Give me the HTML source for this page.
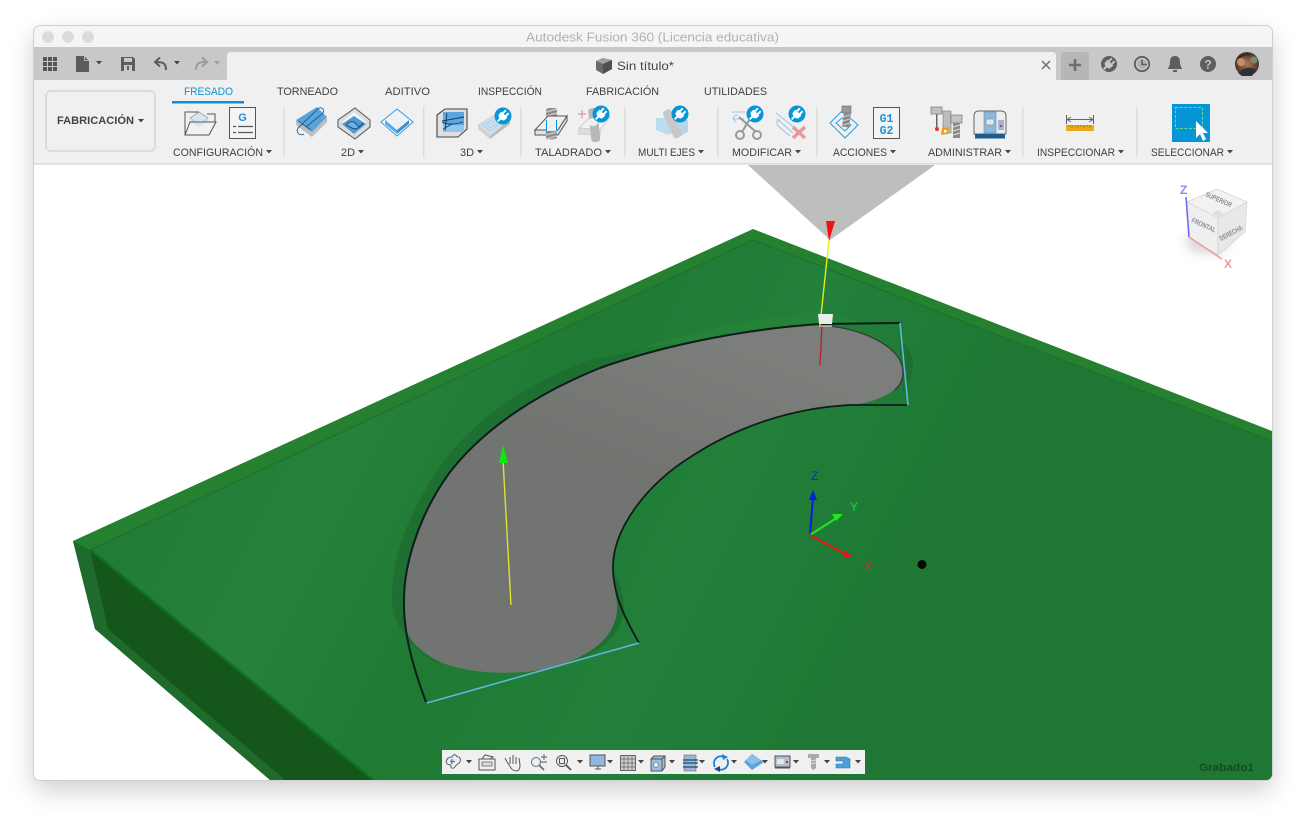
<!DOCTYPE html>
<html lang="es">
<head>
<meta charset="utf-8">
<title>Autodesk Fusion 360</title>
<style>
html,body{margin:0;padding:0;width:1306px;height:822px;overflow:hidden;background:#fff}
#win{position:absolute;left:34px;top:26px;width:1238px;height:754px;border-radius:6px;overflow:hidden;box-shadow:0 0 0 1px #cfcfcf,0 10px 26px rgba(0,0,0,.2);background:#fff}
#win svg{position:absolute;left:-34px;top:-26px;display:block}
text{font-family:"Liberation Sans",sans-serif}
.l{font-size:11px;fill:#404040}
</style>
</head>
<body>
<div id="win">
<svg width="1306" height="822" viewBox="0 0 1306 822" xmlns="http://www.w3.org/2000/svg">
<defs>
<linearGradient id="face" gradientUnits="userSpaceOnUse" x1="120" y1="420" x2="800" y2="760">
<stop offset="0" stop-color="#1f7a34"/><stop offset=".28" stop-color="#26823b"/><stop offset=".5" stop-color="#1f7a33"/><stop offset=".75" stop-color="#22803a"/><stop offset="1" stop-color="#1e7833"/>
</linearGradient>
<linearGradient id="grey" gradientUnits="userSpaceOnUse" x1="700" y1="330" x2="640" y2="480">
<stop offset="0" stop-color="#7c7e7b"/><stop offset="1" stop-color="#717470"/>
</linearGradient>
<radialGradient id="av" cx=".5" cy=".5" r=".6"><stop offset="0" stop-color="#b07a58"/><stop offset=".6" stop-color="#6a4634"/><stop offset="1" stop-color="#2a2a2a"/></radialGradient>
<filter id="blur" x="-50%" y="-50%" width="200%" height="200%"><feGaussianBlur stdDeviation="5"/></filter>
<g id="plug">
<circle r="8.500" fill="#0696d7"/>
<g transform="rotate(45)" fill="#fff">
<path d="M-4.200 -2 H4.200 V.8 Q4.200 4 0 4 Q-4.200 4 -4.200 .8 Z"/>
<rect x="-3" y="-6" width="2" height="4"/><rect x="1" y="-6" width="2" height="4"/>
<rect x="-1" y="3.500" width="2" height="4"/>
</g>
</g>
<polygon id="c" points="0,0 6,0 3,3.500" fill="#444"/>
</defs>

<!-- viewport -->
<rect x="34" y="164" width="1238" height="616" fill="#fff"/>
<polygon points="753,229 1272,431 1272,780 270,780 95,629 73,541" fill="#25802f"/>
<polygon points="73,541 90,550 108,629 285,780 270,780 95,629" fill="#1e6b2b"/>
<polygon points="90,550 373,780 285,780 108,629" fill="#15561a"/>
<polygon points="90,550 753,240 1272,441 1272,780 373,780" fill="url(#face)"/>
<path d="M90 550 L373 780" stroke="#0f6e1f" stroke-width="2.500" fill="none"/>
<path d="M90 550 L753 240 L1272 441" stroke="#1b6f2e" stroke-width="1" fill="none"/>

<!-- pocket shadows / ledge -->
<path d="M440 664 C410 650 393 625 392 600 C391 555 412 500 455 447 C490 408 540 378 590 360 L640 350 L600 372 L450 480 L410 600 Z" fill="#1e7032"/>
<path d="M615 575 C624 590 625 605 622 620 C615 640 600 650 578 660 L590 645 L612 610 Z" fill="#1e7032"/>
<path d="M640 348 C700 328 770 316 817 313 C835 313 850 317 860 323 L820 325 L700 342 Z" fill="#248239"/>
<path d="M900 340 C908 347 913 355 913 362 C913 375 909 385 903 394 L900 365 Z" fill="#1e7032"/>

<!-- grey -->
<path d="M405 625 C403 615 404 605 404 600 C404 560 422 510 450 472 C485 427 540 392 600 368 C650 350 730 330 820 325 C860 328 902 345 903 372 C903 390 880 402 850 405 C790 408 735 428 692 456 C645 485 613 530 613 567 C613 580 615 590 617 603 C619 625 605 648 570 661 C540 675 480 678 440 662 C420 652 408 640 405 625 Z" fill="url(#grey)"/>
<path d="M820 325 C860 328 902 345 903 372 C903 380 900 385 895 390" fill="none" stroke="#2c3e34" stroke-width="1.300"/>
<path d="M426 702 C412 665 403 630 404 600 C404 560 422 510 450 472 C485 427 540 392 600 368 C650 350 730 330 820 324 L900 323" fill="none" stroke="#0f1c1c" stroke-width="2"/>
<path d="M639 643 C625 618 613 595 613 567 C613 530 645 485 692 456 C735 428 790 408 850 405 L907 405" fill="none" stroke="#0f1c1c" stroke-width="1.800"/>
<path d="M427 703 L639 643 M900 323 L908 405" fill="none" stroke="#63b5de" stroke-width="1.600"/>

<!-- cone -->
<polygon points="748,165 935,165 830,240" fill="#bebebd"/>
<path d="M829 240 L820 325" stroke="#e8e81a" stroke-width="1.400" fill="none"/>
<path d="M822 326 L820 365" stroke="#b3262a" stroke-width="1.400" fill="none"/>
<polygon points="826,221 835,221 829,241" fill="#f50f0f"/>
<polygon points="818,314 833,314 832,324 819,324" fill="#e8ecea"/>
<path d="M819 326 L832 326" stroke="#e8ecea"/>
<path d="M503 460 L511 605" stroke="#e2e22a" stroke-width="1.400" fill="none"/>
<polygon points="503,445 508,463 499,463" fill="#0fe80f"/>

<!-- axes -->
<path d="M810 535 L813 498" stroke="#0a1ee0" stroke-width="2" fill="none"/>
<polygon points="813,490 817,500 809,500" fill="#0a1ee0"/>
<path d="M810 535 L838 517" stroke="#22e622" stroke-width="2" fill="none"/>
<polygon points="843,514 836,521 832,514" fill="#22e622"/>
<path d="M810 535 L845 554" stroke="#ee1212" stroke-width="2" fill="none"/>
<polygon points="853,558 843,558 846,551" fill="#ee1212"/>
<text x="811" y="480" font-size="12" fill="#0a2ad0">Z</text>
<text x="850" y="511" font-size="12" fill="#22d83a">Y</text>
<text x="864" y="570" font-size="12" fill="#dc2a2a">X</text>
<circle cx="922" cy="564.500" r="4.500" fill="#070c08"/>
<text x="1199" y="771" font-size="11" font-weight="bold" fill="#164a20" textLength="55" lengthAdjust="spacingAndGlyphs">Grabado1</text>

<!-- view cube -->
<ellipse cx="1207" cy="242" rx="22" ry="12" fill="#bdbdbd" opacity=".55" filter="url(#blur)"/>
<polygon points="1217,189 1247,202 1218,218 1187,202" fill="#f2f2f2" stroke="#d2d2d2" stroke-width=".7"/>
<polygon points="1187,202 1218,218 1218,255 1189,237" fill="#efefef" stroke="#d2d2d2" stroke-width=".7"/>
<polygon points="1247,202 1218,218 1218,255 1245,232" fill="#e8e8e8" stroke="#d2d2d2" stroke-width=".7"/>
<polygon points="1212,213 1218,210 1224,214 1218,217" fill="#dedede"/>
<text transform="translate(1205,196) rotate(24)" font-size="7" font-weight="bold" fill="#8c8c8c" textLength="28" lengthAdjust="spacingAndGlyphs">SUPERIOR</text>
<text transform="translate(1191,222) rotate(24)" font-size="7" font-weight="bold" fill="#8c8c8c" textLength="26" lengthAdjust="spacingAndGlyphs">FRONTAL</text>
<text transform="translate(1221,241) rotate(-28)" font-size="7" font-weight="bold" fill="#8c8c8c" textLength="25" lengthAdjust="spacingAndGlyphs">DERECHA</text>
<path d="M1186 197 L1189 237" stroke="#6a6ef0" stroke-width="1.600" fill="none"/>
<path d="M1189 237 L1222 259" stroke="#ee9c9c" stroke-width="1.600" fill="none"/>
<text x="1180" y="194" font-size="12" font-weight="bold" fill="#8a8ee8">Z</text>
<text x="1224" y="268" font-size="12" font-weight="bold" fill="#f09a9a">X</text>

<!-- title bar -->
<rect x="34" y="26" width="1238" height="21" fill="#f5f5f5"/>
<circle cx="48" cy="37" r="6" fill="#dcdcdc"/><circle cx="68" cy="37" r="6" fill="#dcdcdc"/><circle cx="88" cy="37" r="6" fill="#dcdcdc"/>
<text x="526" y="41.500" font-size="13" fill="#b2b2b2" textLength="253" lengthAdjust="spacingAndGlyphs">Autodesk Fusion 360 (Licencia educativa)</text>

<!-- tab strip -->
<rect x="34" y="47" width="1238" height="33" fill="#c8c8c8"/>
<rect x="34" y="80" width="1238" height="85" fill="#f0f0f0"/>
<path d="M227 80 V56 Q227 52 231 52 H1052 Q1056 52 1056 56 V80 Z" fill="#f0f0f0"/>
<path d="M1061 80 V56 Q1061 52 1065 52 H1085 Q1089 52 1089 56 V80 Z" fill="#b6b6b6"/>
<path d="M1075 59 V71 M1069 65 H1081" stroke="#6e6e6e" stroke-width="2.600"/>
<rect x="34" y="163" width="1238" height="1.500" fill="#dedede"/>

<!-- grid -->
<g fill="#555">
<rect x="43" y="57" width="4" height="4"/><rect x="48" y="57" width="4" height="4"/><rect x="53" y="57" width="4" height="4"/>
<rect x="43" y="62" width="4" height="4"/><rect x="48" y="62" width="4" height="4"/><rect x="53" y="62" width="4" height="4"/>
<rect x="43" y="67" width="4" height="4"/><rect x="48" y="67" width="4" height="4"/><rect x="53" y="67" width="4" height="4"/>
</g>
<path d="M76 56 H84 L89 61 V72 H76 Z" fill="#5c5c5c"/><path d="M84.500 56 V60.500 H89" stroke="#c8c8c8" fill="none" stroke-width=".8"/>
<use href="#c" x="96" y="61"/>
<path d="M121 57 H133 L135 59 V71 H121 Z" fill="#5c5c5c"/><rect x="124" y="58" width="8" height="4" fill="#c8c8c8"/><rect x="124" y="65" width="8" height="6" fill="#c8c8c8"/><rect x="127" y="66" width="2" height="4" fill="#5c5c5c"/>
<path d="M166 70 C166 63 163 62 156 62 M160 57.500 L155 62 L160 66.500" fill="none" stroke="#5c5c5c" stroke-width="2"/>
<use href="#c" x="174" y="61"/>
<path d="M196 70 C196 63 199 62 206 62 M202 57.500 L207 62 L202 66.500" fill="none" stroke="#9c9c9c" stroke-width="2"/>
<polygon points="214,61 220,61 217,65" fill="#a0a0a0"/>

<!-- tab title -->
<polygon points="596,61 603,58 612,60 612,69 603,74 596,70" fill="#6a6a6a"/><polygon points="596,61 603,64 612,60 603,58" fill="#a0a0a0"/><polygon points="603,64 612,60 612,69 603,74" fill="#505050"/>
<text x="617" y="70" font-size="12" fill="#444" textLength="57" lengthAdjust="spacingAndGlyphs">Sin título*</text>
<path d="M1042 61 L1050 69 M1050 61 L1042 69" stroke="#6a6a6a" stroke-width="1.400"/>

<!-- right icons -->
<circle cx="1109" cy="64" r="8" fill="#5e5e5e"/>
<g transform="translate(1109 64) rotate(45)" fill="#c8c8c8"><path d="M-4 -2 H4 V1 Q4 4 0 4 Q-4 4 -4 1 Z"/><rect x="-3" y="-6" width="2" height="4"/><rect x="1" y="-6" width="2" height="4"/><rect x="-1" y="3.500" width="2" height="4"/></g>
<circle cx="1142" cy="64" r="7.200" fill="none" stroke="#5e5e5e" stroke-width="1.800"/><circle cx="1142" cy="64" r="5" fill="#8a8a8a" opacity=".35"/><path d="M1142 59.500 V64.500 H1147" fill="none" stroke="#5e5e5e" stroke-width="1.500"/>
<path d="M1175 56 C1179 56 1180 59 1180 62 C1180 66 1182 68 1182 69 H1168 C1168 68 1170 66 1170 62 C1170 59 1171 56 1175 56 Z" fill="#5e5e5e"/><rect x="1173" y="70" width="4" height="2" fill="#5e5e5e"/>
<circle cx="1208" cy="64" r="8" fill="#5e5e5e"/><text x="1208" y="68.500" font-size="12" font-weight="bold" text-anchor="middle" fill="#c8c8c8">?</text>
<circle cx="1247" cy="64" r="12" fill="url(#av)"/><path d="M1238 73 Q1247 64 1256 70 L1252 76 H1242 Z" fill="#2c3238"/><circle cx="1254" cy="60" r="3.500" fill="#7a8a72"/><circle cx="1241" cy="62" r="4" fill="#c48e68"/><path d="M1238 58 Q1245 53 1250 55" stroke="#3a2a22" stroke-width="2" fill="none"/>

<!-- FABRICACION btn -->
<rect x="46" y="91" width="109" height="60" rx="5" fill="#f0f0f0" stroke="#dcdcdc" stroke-width="2"/>
<text x="57" y="124" font-size="11" font-weight="bold" fill="#444" textLength="77" lengthAdjust="spacingAndGlyphs">FABRICACIÓN</text>
<use href="#c" x="138" y="119"/>

<!-- tabs -->
<text x="184" y="95" font-size="11" fill="#0696d7" textLength="49" lengthAdjust="spacingAndGlyphs">FRESADO</text>
<rect x="172" y="101" width="72" height="2.500" fill="#0696d7"/>
<text class="l" x="277" y="95" textLength="61" lengthAdjust="spacingAndGlyphs">TORNEADO</text>
<text class="l" x="385" y="95" textLength="45" lengthAdjust="spacingAndGlyphs">ADITIVO</text>
<text class="l" x="478" y="95" textLength="64" lengthAdjust="spacingAndGlyphs">INSPECCIÓN</text>
<text class="l" x="586" y="95" textLength="73" lengthAdjust="spacingAndGlyphs">FABRICACIÓN</text>
<text class="l" x="704" y="95" textLength="63" lengthAdjust="spacingAndGlyphs">UTILIDADES</text>

<!-- separators -->
<g fill="#dcdcdc">
<rect x="283" y="107" width="1.500" height="50"/><rect x="423" y="107" width="1.500" height="50"/><rect x="520" y="107" width="1.500" height="50"/><rect x="624" y="107" width="1.500" height="50"/><rect x="717" y="107" width="1.500" height="50"/><rect x="816" y="107" width="1.500" height="50"/><rect x="1022" y="107" width="1.500" height="50"/><rect x="1136" y="107" width="1.500" height="50"/>
</g>

<!-- labels -->
<text class="l" x="173" y="156" textLength="90" lengthAdjust="spacingAndGlyphs">CONFIGURACIÓN</text><use href="#c" x="266" y="150"/>
<text class="l" x="341" y="156" textLength="14" lengthAdjust="spacingAndGlyphs">2D</text><use href="#c" x="358" y="150"/>
<text class="l" x="460" y="156" textLength="14" lengthAdjust="spacingAndGlyphs">3D</text><use href="#c" x="477" y="150"/>
<text class="l" x="535" y="156" textLength="67" lengthAdjust="spacingAndGlyphs">TALADRADO</text><use href="#c" x="605" y="150"/>
<text class="l" x="638" y="156" textLength="57" lengthAdjust="spacingAndGlyphs">MULTI EJES</text><use href="#c" x="698" y="150"/>
<text class="l" x="732" y="156" textLength="60" lengthAdjust="spacingAndGlyphs">MODIFICAR</text><use href="#c" x="795" y="150"/>
<text class="l" x="833" y="156" textLength="54" lengthAdjust="spacingAndGlyphs">ACCIONES</text><use href="#c" x="890" y="150"/>
<text class="l" x="928" y="156" textLength="74" lengthAdjust="spacingAndGlyphs">ADMINISTRAR</text><use href="#c" x="1005" y="150"/>
<text class="l" x="1037" y="156" textLength="78" lengthAdjust="spacingAndGlyphs">INSPECCIONAR</text><use href="#c" x="1118" y="150"/>
<text class="l" x="1151" y="156" textLength="73" lengthAdjust="spacingAndGlyphs">SELECCIONAR</text><use href="#c" x="1227" y="150"/>

<!-- Config icons -->
<path d="M185 135 V112 H199 M207 114 H215 V122" fill="none" stroke="#555" stroke-width="1"/>
<path d="M190 118 L199 112 L208 118 L199 125 Z" fill="#d8e6f0" stroke="#888" stroke-width=".7"/>
<path d="M190 118 L199 125 L208 118 L208 121 L199 128 L190 122 Z" fill="#cfe2f2"/>
<path d="M185 135 L190 122 H216 L209 135 Z" fill="#eef2f5" fill-opacity=".5" stroke="#555" stroke-width="1"/>
<rect x="229.500" y="107.500" width="26" height="31" fill="#f4f4f4" stroke="#555"/>
<text x="242.500" y="121" font-size="11" font-weight="bold" fill="#1b92de" text-anchor="middle">G</text>
<path d="M233 126.500 H236 M238 126.500 H253 M233 132.500 H236 M238 132.500 H253" stroke="#555" stroke-width="1.200"/>

<!-- 2D -->
<polygon points="296,120 312,132 327,117 327,122 312,137 296,125" fill="#bdbdbd"/>
<polygon points="296,120 317,107 327,117 312,132" fill="#5aa4dc"/>
<path d="M304 134 A3.500 3.500 0 0 1 299 127 L318 109 A2.500 2.500 0 0 1 323 113 L306 127 M298 121 L311 130" fill="none" stroke="#1f5a8a" stroke-width=".9"/>
<polygon points="355,108 370,120 370,127 355,139 338,127 338,120" fill="#dcdcdc" stroke="#555" stroke-width="1"/>
<polygon points="354,112 366,122 354,133 342,122" fill="#f6f6f6"/>
<polygon points="354,116 366,124 354,134 342,124" fill="#4b99d6"/>
<path d="M346 125 Q352 119 356 124 T363 123 Q357 131 352 128 T346 125" fill="#6fb0e2" stroke="#123c5c" stroke-width=".8"/>
<polygon points="381,122 397,136 413,122 397,109" fill="#fff" stroke="#2e9ae0" stroke-width="1"/>
<polygon points="385,120 397,110 409,120 397,130" fill="#eef2f6"/>
<polygon points="385,120 397,130 397,134 385,124" fill="#5aa6e0"/><polygon points="409,120 397,130 397,134 409,124" fill="#3f8fd0"/>

<!-- 3D -->
<polygon points="437,115 445,109 467,109 467,129 458,137 437,137" fill="#e0e0e0" stroke="#444" stroke-width="1.100"/>
<rect x="443" y="112" width="21" height="20" fill="#5aa6e0"/>
<rect x="443" y="125" width="21" height="7" fill="#93c4ea"/>
<path d="M442 121 L464 117 M442 122 Q450 126 463 122 M443 129 L452 124 M447 113 L445 131" stroke="#173a5c" stroke-width=".9" fill="none"/>
<polygon points="478,125 500,112 510,120 490,136" fill="#cfe0ee" stroke="#d0d0d0"/>
<path d="M483 125 L500 115 L506 120 L490 131 Z M487 125 L500 118 L502 120 L490 128 Z" fill="none" stroke="#a8c8e0" stroke-width=".7"/>
<polygon points="478,125 490,136 490,139 478,129" fill="#d0d0d0"/><polygon points="510,120 490,136 490,139 510,124" fill="#bcbcbc"/>
<use href="#plug" x="503" y="116"/>

<!-- drilling -->
<rect x="546" y="108" width="11" height="30" rx="3" fill="#8c8c8c"/>
<path d="M546 112 L557 109 M546 116 L557 113 M546 120 L557 117 M546 134 L557 131 M546 138 L557 135" stroke="#c4c4c4" stroke-width="1.500"/>
<polygon points="535,130 548,116 567,116 558,130" fill="#efefef" stroke="#555"/>
<path d="M535 130 H558 L567 116 V121 L558 135 H535 Z" fill="#e2e2e2" stroke="#555"/>
<rect x="546" y="121" width="11" height="10" fill="#efefef"/>
<path d="M546.500 120 V131 M556.500 120 V131" stroke="#0696d7"/>
<path d="M546 131 H557 V138 Q551 141 546 138 Z" fill="#8c8c8c"/>
<path d="M546 135 L557 132 M546 139 L557 136" stroke="#c4c4c4" stroke-width="1.500"/>
<path d="M582 110 V118 M578 114 H586" stroke="#e79494" stroke-width="1.300"/>
<polygon points="579,128 590,117 610,117 600,130" fill="#f2f2f2" stroke="#ccc"/>
<polygon points="579,128 600,130 600,135 579,134" fill="#dfdfdf" stroke="#ccc"/>
<rect x="590" y="108" width="9" height="34" rx="3" fill="#b8b8b8" transform="rotate(-6 595 127)"/>
<ellipse cx="593" cy="122" rx="5" ry="4" fill="#efefef"/>
<use href="#plug" x="601" y="114"/>

<!-- multi -->
<polygon points="656,118 680,118 680,130 668,135 656,130" fill="#bcdcf2"/>
<polygon points="670,122 688,120 688,132 676,138" fill="#b4d6ef"/>
<rect x="668" y="109" width="9" height="30" rx="3" fill="#c8c8c8" transform="rotate(-25 672 124)"/>
<use href="#plug" x="680" y="114"/>

<!-- modify -->
<path d="M732 112 H745 M732 119 H744 M736 122 Q730 116 738 115" stroke="#9cc6e6" fill="none" stroke-width="1"/>
<path d="M739 117 L756 132 M751 117 L742 132" stroke="#999" stroke-width="2"/>
<circle cx="740" cy="135" r="4" fill="none" stroke="#999" stroke-width="2"/><circle cx="757" cy="135" r="4" fill="none" stroke="#999" stroke-width="2"/>
<use href="#plug" x="755" y="114"/>
<path d="M776 113 L795 128 M777 119 L793 133 M778 126 L790 136 M778 126 Q775 120 780 120" stroke="#9cc6e6" fill="none" stroke-width="1.100"/>
<path d="M793 127 L805 138 M805 127 L793 138" stroke="#e59b9b" stroke-width="3.500"/>
<use href="#plug" x="797" y="114"/>

<!-- actions -->
<polygon points="830,123 842,111 858,125 845,138" fill="none" stroke="#2a9ae2" stroke-width="1"/>
<polygon points="836,123 842,118 851,125 845,131" fill="none" stroke="#2a9ae2" stroke-width="1"/>
<rect x="842" y="106" width="9" height="7" fill="#999" stroke="#666" stroke-width=".6"/>
<rect x="843" y="113" width="7" height="14" fill="#888" transform="rotate(8 846 120)"/>
<path d="M843 117 L850 115 M843 121 L850 119 M843 125 L850 123" stroke="#ccc" stroke-width="1"/>
<rect x="873.500" y="107.500" width="26" height="31" fill="#f4f4f4" stroke="#555"/>
<text x="886.500" y="122" font-size="11.500" font-weight="bold" fill="#1b92de" text-anchor="middle" style="font-family:'Liberation Mono',monospace">G1</text>
<text x="886.500" y="134" font-size="11.500" font-weight="bold" fill="#1b92de" text-anchor="middle" style="font-family:'Liberation Mono',monospace">G2</text>

<!-- manage -->
<rect x="931" y="107" width="11" height="7" fill="#c0c0c0" stroke="#777" stroke-width=".7"/>
<rect x="936" y="114" width="1.500" height="14" fill="#666"/>
<circle cx="937" cy="129" r="2" fill="#e8303a"/>
<rect x="943" y="111" width="8" height="22" fill="#bdbdbd" stroke="#888" stroke-width=".7"/>
<rect x="951" y="115" width="11" height="8" fill="#c4c4c4" stroke="#777" stroke-width=".7"/>
<rect x="953" y="123" width="7" height="15" fill="#8a8a8a"/>
<path d="M953 127 L960 125 M953 131 L960 129 M953 135 L960 133" stroke="#ddd"/>
<polygon points="942,128 950,127 948,134 941,135" fill="#e8a020"/>
<rect x="944" y="130" width="2.500" height="2.500" fill="#fff"/>
<path d="M974 134 V116 Q974 111 979 111 H1001 Q1006 111 1006 116 V134 Z" fill="#ececec" stroke="#666"/>
<rect x="975" y="134" width="30" height="4.500" fill="#1e5c8e"/>
<rect x="984" y="112" width="12" height="21" fill="#8cb8dc" stroke="#6a8eaa" stroke-width=".6"/>
<rect x="986" y="119" width="8" height="6" fill="#dce8f0" stroke="#777" stroke-width=".5"/>
<rect x="998" y="120" width="6" height="10" fill="#9cb8d0"/><rect x="1000" y="125" width="2" height="2" fill="#e03040"/>

<!-- inspect -->
<path d="M1066.500 115 V124 M1093.500 115 V124" stroke="#666"/>
<path d="M1067 119.500 H1093 M1071 117 L1067 119.500 L1071 122 M1089 117 L1093 119.500 L1089 122" stroke="#666" fill="none"/>
<rect x="1066" y="125" width="28" height="6" fill="#f0a818"/>
<path d="M1069 125 V127 M1072 125 V128 M1075 125 V127 M1078 125 V128 M1081 125 V127 M1084 125 V128 M1087 125 V127 M1090 125 V128" stroke="#7a5808" stroke-width=".6"/>

<!-- select -->
<rect x="1172" y="104" width="38" height="38" fill="#0696d7"/>
<rect x="1175.500" y="107.500" width="27" height="21" fill="none" stroke="#62dc9c" stroke-dasharray="3 1.500"/>
<path d="M1196 121 V138 L1200 134 L1203 141 L1206 139 L1203 133 L1208 133 Z" fill="#fff"/>

<!-- bottom toolbar -->
<rect x="442" y="750" width="423" height="24" fill="#f0f0f0"/>
<use href="#c" x="466" y="760"/><use href="#c" x="577" y="760"/><use href="#c" x="607" y="760"/><use href="#c" x="638" y="760"/><use href="#c" x="669" y="760"/><use href="#c" x="699" y="760"/><use href="#c" x="731" y="760"/><use href="#c" x="762" y="760"/><use href="#c" x="793" y="760"/><use href="#c" x="824" y="760"/><use href="#c" x="855" y="760"/>
<path d="M446 762 Q447 757 452 757 Q453 754 456 755 Q456 757 459 757 Q462 760 459 763 Q456 765 454 768 Q450 769 451 765 Q447 765 446 762 Z" fill="none" stroke="#555" stroke-width=".9"/>
<path d="M452 759 V764 M450 761.500 H455" stroke="#1b82d8" stroke-width="1.200"/>
<path d="M479 759 H495 V770 H479 Z M482 759 L485 755 L493 757 L490 759" fill="none" stroke="#555" stroke-width="1"/><rect x="482" y="762" width="10" height="4" fill="#ddd" stroke="#555" stroke-width=".7"/>
<path d="M507 762 L511 768 Q513 771 517 771 Q520 770 520 765 L519 758 M516 757 V764 M513 755 V764 M510 757 V764 M507 762 L505 758" fill="none" stroke="#555" stroke-width="1"/>
<circle cx="536" cy="762" r="4.500" fill="#e4eff8" stroke="#666"/><path d="M539.500 765.500 L544 770" stroke="#666" stroke-width="1.600"/><path d="M541 757 H547 M544 754 V760 M541 762 H547" stroke="#555" stroke-width=".9"/>
<circle cx="562" cy="761" r="5.500" fill="#e4eff8" stroke="#555"/><rect x="559.500" y="758.500" width="5" height="5" fill="none" stroke="#555"/><path d="M566 765 L571 770" stroke="#555" stroke-width="1.800"/>
<rect x="590" y="755" width="15" height="11" fill="#8eb8de" stroke="#555"/><path d="M595 769 H601 M598 766 V769" stroke="#555"/>
<rect x="620.500" y="755.500" width="15" height="15" fill="#cdcdcd" stroke="#666"/>
<path d="M624 755 V771 M628 755 V771 M632 755 V771 M620 759 H636 M620 763 H636 M620 767 H636" stroke="#666" stroke-width=".7"/>
<polygon points="651,759 654,756 665,756 665,767 662,771 651,771" fill="#9cc0dc" stroke="#555"/><path d="M651 759 H662 V771 M662 759 L665 756" stroke="#555" fill="none"/><circle cx="656" cy="765" r="2.500" fill="#eee" stroke="#666" stroke-width=".6"/>
<rect x="684" y="755" width="12" height="16" fill="#9cb6d2" stroke="#666" stroke-width=".6"/><path d="M683 760 H698 M683 763 H698 M683 767 H698" stroke="#1b4a80" stroke-width="1.300"/>
<path d="M715 767 A7 7 0 0 1 724 757 M727 759 A7 7 0 0 1 718 769" fill="none" stroke-width="1.800" stroke="#1b82d8"/><polygon points="722,754 728,757 723,760" fill="#1b82d8"/><polygon points="720,766 714,769 720,772" fill="#1b4a80"/>
<polygon points="744,762 752,754 764,762 752,770" fill="#5aa6dc"/><polygon points="746,760 752,755 761,760 752,765" fill="#8cc2e8"/>
<rect x="775" y="756" width="15" height="11" fill="#b4c0ce" stroke="#555"/><rect x="777" y="759" width="7" height="5" fill="#dfe6ec"/><rect x="786" y="761" width="2" height="2" fill="#c0303a"/><path d="M775 768 H790" stroke="#555"/>
<rect x="808" y="754" width="11" height="4" fill="#aaa"/><polygon points="811,758 816,758 816,768 813.500,770 811,768" fill="#a8a8a8"/><path d="M811 761 L816 760 M811 764 L816 763" stroke="#ddd"/>
<path d="M836 757 H846 L850 759 V768 L846 768 H836 V764 H842 Q845 762 842 761 H836 Z" fill="#4d9fdc" stroke="#2a78b8" stroke-width=".6"/>
</svg>
</div>
</body>
</html>
